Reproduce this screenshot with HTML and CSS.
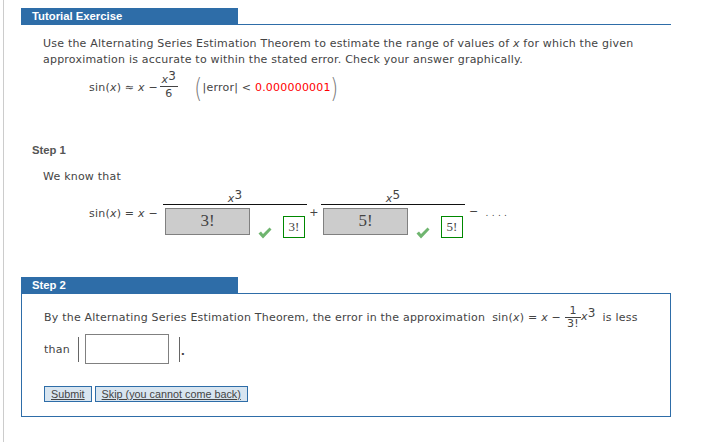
FILE: index.html
```html
<!DOCTYPE html>
<html lang="en">
<head>
<meta charset="utf-8">
<title>Tutorial Exercise</title>
<link rel="stylesheet" href="styles.css">
</head>
<body>
<main class="page">
  <section class="intro">
    <div class="tabbar"><h2 class="tab">Tutorial Exercise</h2></div>
    <div class="intro-body">
      <p class="lead">Use the Alternating Series Estimation Theorem to estimate the range of values of <i>x</i> for which the given approximation is accurate to within the stated error. Check your answer graphically.</p>
      <div class="math given">
        <span>sin(<i>x</i>) ≈ <i>x</i> −</span>
        <span class="frac small"><span class="num"><i>x</i><sup>3</sup></span><span class="den">6</span></span>
        <span class="paren">(</span>
        <span class="err">|error| &lt; <span class="red">0.000000001</span></span>
        <span class="paren last">)</span>
      </div>
    </div>
  </section>

  <section class="step-one">
    <h3 class="step-label">Step 1</h3>
    <p class="know">We know that</p>
    <div class="math series">
      <span class="lhs">sin(<i>x</i>) = <i>x</i> −</span>
      <span class="term">
        <span class="term-num"><i>x</i><sup>3</sup></span>
        <span class="term-den">
          <span class="answer">3!</span>
          <svg class="check" viewBox="0 0 14 12"><path d="M0.5 6.5 L3 4.5 L5 7 L11.5 0.5 L13.5 2.5 L5 11.5 Z"/></svg>
          <span class="solution">3!</span>
        </span>
      </span>
      <span class="plus">+</span>
      <span class="term">
        <span class="term-num"><i>x</i><sup>5</sup></span>
        <span class="term-den">
          <span class="answer">5!</span>
          <svg class="check" viewBox="0 0 14 12"><path d="M0.5 6.5 L3 4.5 L5 7 L11.5 0.5 L13.5 2.5 L5 11.5 Z"/></svg>
          <span class="solution">5!</span>
        </span>
      </span>
      <span class="tail">−</span><span class="dots">. . . .</span>
    </div>
  </section>

  <section class="step-two">
    <div class="tabbar"><h2 class="tab">Step 2</h2></div>
    <div class="box">
      <div class="math sentence">
        <span>By the Alternating Series Estimation Theorem, the error in the approximation</span>
        <span class="inline-math">sin(<i>x</i>) = <i>x</i> −</span>
        <span class="frac tiny"><span class="num">1</span><span class="den">3!</span></span>
        <span class="power"><i>x</i><sup>3</sup></span>
        <span class="after">is less</span>
      </div>
      <div class="than">
        <span>than</span>
        <span class="bar"></span>
        <span class="field"></span>
        <span class="bar right"></span>
        <span class="period">.</span>
      </div>
      <div class="buttons">
        <a class="btn" href="#">Submit</a>
        <a class="btn" href="#">Skip (you cannot come back)</a>
      </div>
    </div>
  </section>
</main>
</body>
</html>
```

FILE: styles.css
```css
* { box-sizing: border-box; }
html, body { margin: 0; padding: 0; background: #fff; }
body {
  font-family: "DejaVu Sans", Verdana, sans-serif;
  font-size: 11px;
  letter-spacing: .21px;
  color: #444;
  height: 442px;
  overflow: hidden;
}
.page {
  margin-left: 3px;
  border-left: 1px solid #ccc;
  padding: 8px 0 0 17px;
  width: 668px;
  height: 442px;
}
i { font-style: italic; }
sup { font-size: 12px; line-height: 0; vertical-align: 3px; }
.tabbar { height: 17px; border-bottom: 1px solid #2e6da8; }
.tab {
  margin: 0;
  width: 217px;
  height: 17px;
  padding-left: 11px;
  background: #2e6da8;
  color: #fff;
  font-family: "Liberation Sans", Arial, sans-serif;
  font-size: 11.3px;
  letter-spacing: 0;
  font-weight: bold;
  line-height: 16px;
}
.intro-body { padding: 11px 0 0 22px; }
.lead { margin: 0; line-height: 16px; width: 610px; }
.math { display: flex; align-items: center; }
.given { margin: 6px 0 0 46px; height: 27px; }
.frac { display: inline-flex; flex-direction: column; align-items: center; }
.frac .num { border-bottom: 1px solid #444; }
.frac.small { margin-left: 2px; width: 18px; }
.frac.small .num { width: 18px; text-align: center; line-height: 12px; }
.frac.small .den { line-height: 14px; }
.paren {
  font-size: 27px;
  font-weight: 200;
  line-height: 26px;
  margin-left: 15px;
  color: #777;
  transform: scaleX(.75);
}
.paren.last { margin-left: -2px; }
.err { margin-left: -1px; }
.red { color: #f00; }

.step-one { margin-top: 42px; }
.step-label {
  margin: 0 0 0 11px;
  font-family: "Liberation Sans", Arial, sans-serif;
  font-size: 11.3px;
  letter-spacing: 0;
  font-weight: bold;
  line-height: 14px;
  color: #555;
}
.know { margin: 13px 0 0 22px; line-height: 14px; }
.series { margin: 5px 0 0 68px; align-items: flex-start; }
.lhs { margin-top: 18px; width: 74px; }
.term { display: flex; flex-direction: column; }
.term-num { height: 15px; line-height: 19px; text-align: center; border-bottom: 1px solid #111; box-sizing: content-box; }
.term-den { display: flex; align-items: flex-start; margin-top: 3px; padding-left: 2px; }
.term:nth-of-type(2) { width: 144px; }
.term:nth-of-type(4) { width: 144px; }
.answer {
  width: 85px;
  height: 27px;
  background: #ccc;
  border: 1px solid #808080;
  font-family: "Liberation Serif", serif;
  font-size: 17px;
  letter-spacing: 0;
  line-height: 23px;
  text-align: center;
}
.check { width: 14px; height: 12px; margin: 19px 0 0 8px; fill: #6fb56f; }
.solution {
  width: 22px;
  height: 22px;
  margin: 8px 0 0 11px;
  border: 1px solid #080;
  font-family: "Liberation Serif", serif;
  font-size: 13px;
  letter-spacing: 0;
  line-height: 20px;
  text-align: center;
}
.plus { margin-top: 17px; width: 14px; text-align: center; line-height: 14px; }
.tail { margin: 16px 0 0 4px; }
.dots { margin: 19px 0 0 7px; font-size: 9px; letter-spacing: .25px; }

.step-two { margin-top: 38px; }
.box {
  height: 123px;
  border: 1px solid #2e6da8;
  border-top: 0;
  padding: 10px 0 0 22px;
}
.sentence { height: 26px; }
.inline-math { margin-left: 7px; }
.frac.tiny { margin-left: 4px; width: 16px; }
.frac.tiny .num { width: 16px; text-align: center; line-height: 13px; }
.frac.tiny .den { line-height: 12px; }
.power { margin-top: -2px; }
.after { margin-left: 7px; }
.than { display: flex; align-items: center; margin-top: 4px; height: 30px; }
.bar { width: 1px; height: 25px; background: #666; margin-left: 8px; }
.field { width: 84px; height: 30px; margin-left: 6px; border: 1px solid #808080; background: #fff; }
.bar.right { margin-left: 10px; }
.period { margin-left: 1px; margin-top: 4px; font-weight: bold; }
.buttons { display: flex; gap: 3px; margin-top: 22px; }
.btn {
  display: block;
  height: 16px;
  padding: 0 6px;
  background: #d8e5f0;
  border: 1px solid #2e6da8;
  font-family: "Liberation Sans", Arial, sans-serif;
  font-size: 10.8px;
  letter-spacing: 0;
  line-height: 14px;
  color: #444;
}
```
